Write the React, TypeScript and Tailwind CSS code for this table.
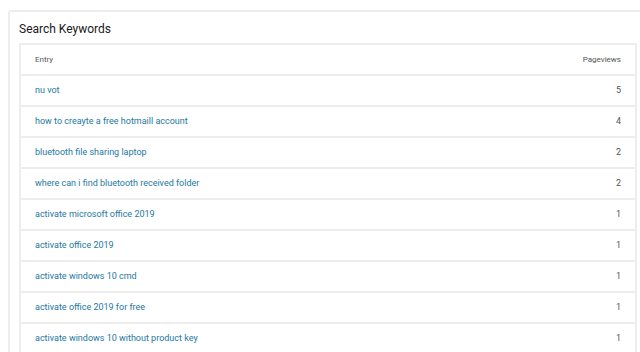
import React from 'react';

const rows = [
  { entry: 'nu vot', views: 5 },
  { entry: 'how to creayte a free hotmaill account', views: 4 },
  { entry: 'bluetooth file sharing laptop', views: 2 },
  { entry: 'where can i find bluetooth received folder', views: 2 },
  { entry: 'activate microsoft office 2019', views: 1 },
  { entry: 'activate office 2019', views: 1 },
  { entry: 'activate windows 10 cmd', views: 1 },
  { entry: 'activate office 2019 for free', views: 1 },
  { entry: 'activate windows 10 without product key', views: 1 },
];

const App = () => {
  return (
    <div className="w-[640px] h-[352px] overflow-hidden bg-white pt-[10px] pl-[8px] font-['Roboto',sans-serif]">
      <div className="w-[660px] rounded-[3px] border-2 border-[#ededed] bg-white pl-[9px] pr-[4px] pt-[7px]">
        <h2 className="text-[12px] leading-[20px] text-[#1a1a1a] mb-[4px]">Search Keywords</h2>
        <div className="w-[618px] border-2 border-[#ededed] border-b-0">
          <div className="flex items-center justify-between h-[31px] px-[14px] border-b-2 border-[#ededed] text-[8px] text-[#555]">
            <span>Entry</span>
            <span>Pageviews</span>
          </div>
          {rows.map((r) => (
            <div
              key={r.entry}
              className="flex items-center justify-between h-[31px] px-[14px] border-b-2 border-[#ededed] text-[9px]"
            >
              <span className="text-[#23789f]">{r.entry}</span>
              <span className="text-[#555]">{r.views}</span>
            </div>
          ))}
        </div>
      </div>
    </div>
  );
};

export default App;
